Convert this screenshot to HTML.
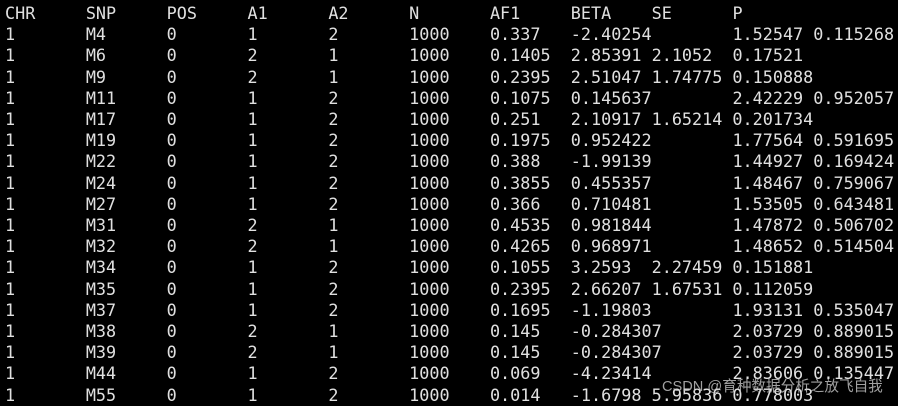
<!DOCTYPE html>
<html><head><meta charset="utf-8"><style>
html,body{margin:0;padding:0;background:#000;width:898px;height:402px;overflow:hidden}
pre{margin:0;position:absolute;left:5px;top:3px;font-family:"DejaVu Sans Mono","Liberation Mono",monospace;font-size:16.8px;line-height:21.2px;color:#e0e0e0;tab-size:8;-moz-tab-size:8;letter-spacing:0}
.wm{position:absolute;left:662px;top:375px;font-family:"Liberation Sans","Noto Sans CJK SC",sans-serif;font-size:14.6px;color:rgba(200,200,200,0.8);white-space:nowrap}
</style></head><body>
<pre>CHR	SNP	POS	A1	A2	N	AF1	BETA	SE	P
1	M4	0	1	2	1000	0.337	-2.40254	1.52547 0.115268
1	M6	0	2	1	1000	0.1405	2.85391 2.1052	0.17521
1	M9	0	2	1	1000	0.2395	2.51047 1.74775 0.150888
1	M11	0	1	2	1000	0.1075	0.145637	2.42229 0.952057
1	M17	0	1	2	1000	0.251	2.10917 1.65214 0.201734
1	M19	0	1	2	1000	0.1975	0.952422	1.77564 0.591695
1	M22	0	1	2	1000	0.388	-1.99139	1.44927 0.169424
1	M24	0	1	2	1000	0.3855	0.455357	1.48467 0.759067
1	M27	0	1	2	1000	0.366	0.710481	1.53505 0.643481
1	M31	0	2	1	1000	0.4535	0.981844	1.47872 0.506702
1	M32	0	2	1	1000	0.4265	0.968971	1.48652 0.514504
1	M34	0	1	2	1000	0.1055	3.2593	2.27459 0.151881
1	M35	0	1	2	1000	0.2395	2.66207 1.67531 0.112059
1	M37	0	1	2	1000	0.1695	-1.19803	1.93131 0.535047
1	M38	0	2	1	1000	0.145	-0.284307	2.03729 0.889015
1	M39	0	2	1	1000	0.145	-0.284307	2.03729 0.889015
1	M44	0	1	2	1000	0.069	-4.23414	2.83606 0.135447
1	M55	0	1	2	1000	0.014	-1.6798 5.95836 0.778003</pre>
<div class="wm">CSDN @育种数据分析之放飞自我</div>
</body></html>
